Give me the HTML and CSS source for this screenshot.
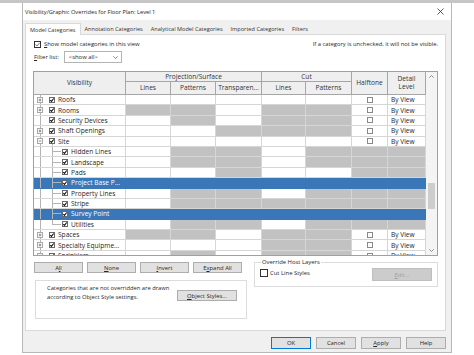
FILE: index.html
```html
<!DOCTYPE html>
<html lang="en">
<head>
    <meta charset="UTF-8">
    <meta name="viewport" content="width=device-width, initial-scale=1.0">
    <title>Visibility/Graphic Overrides</title>
    <link rel="stylesheet" href="styles.css">
</head>
<body>
    <svg class="defs" width="0" height="0">
        <symbol id="check" viewBox="0 0 6 6">
            <rect x="0.5" y="0.5" width="5" height="5" fill="#fff" stroke="#6a6a6a"/>
            <path d="M1.3 3.1 L2.5 4.4 L4.7 1.5" fill="none" stroke="#111" stroke-width="1.1"/>
        </symbol>
        <symbol id="plus" viewBox="0 0 6 6">
            <rect x="0.5" y="0.5" width="5" height="5" fill="#fff" stroke="#a8a8a8"/>
            <path d="M1.6 3 H4.4 M3 1.6 V4.4" stroke="#6a6a6a" stroke-width="0.8"/>
        </symbol>
        <symbol id="minus" viewBox="0 0 6 6">
            <rect x="0.5" y="0.5" width="5" height="5" fill="#fff" stroke="#a8a8a8"/>
            <path d="M1.6 3 H4.4" stroke="#6a6a6a" stroke-width="0.8"/>
        </symbol>
    </svg>

    <div class="top-strip"></div>

    <div class="dialog">
        <div class="titlebar">
            <span>Visibility/Graphic Overrides for Floor Plan: Level 1</span>
            <svg class="close" viewBox="0 0 7 7"><path d="M0.5 0.5 L6.5 6.5 M6.5 0.5 L0.5 6.5" stroke="#333" stroke-width="0.8"/></svg>
        </div>

        <div class="dialog-body">
            <div class="tabs">
                <div class="tab active">Model Categories</div>
                <div class="tab">Annotation Categories</div>
                <div class="tab">Analytical Model Categories</div>
                <div class="tab">Imported Categories</div>
                <div class="tab">Filters</div>
            </div>

            <div class="panel">
                <div class="opts">
                    <label class="check-label">
                        <svg class="box7" viewBox="0 0 7 7"><rect x="0.5" y="0.5" width="6" height="6" fill="#fff" stroke="#333"/><path d="M1.4 3.6 L2.9 5 L5.6 1.9" fill="none" stroke="#333" stroke-width="0.7"/></svg>
                        <span><u>S</u>how model categories in this view</span>
                    </label>
                    <span class="hint">If a category is unchecked, it will not be visible.</span>
                </div>

                <div class="filter">
                    <span><u>F</u>ilter list:</span>
                    <div class="select">
                        <span>&lt;show all&gt;</span>
                        <svg class="chev" viewBox="0 0 5 3"><path d="M0.3 0.3 L2.5 2.5 L4.7 0.3" fill="none" stroke="#555" stroke-width="0.7"/></svg>
                    </div>
                </div>

                <div class="grid-wrap">
                    <div class="grid">
                        <div class="head">
                            <div class="h-vis">Visibility</div>
                            <div class="h-proj">Projection/Surface</div>
                            <div class="h-cut">Cut</div>
                            <div class="h-half">Halftone</div>
                            <div class="h-detail">Detail<br>Level</div>
                            <div>Lines</div>
                            <div>Patterns</div>
                            <div>Transparen...</div>
                            <div>Lines</div>
                            <div>Patterns</div>
                        </div>

                        <div class="rows">
                            <div class="row">
                                <div class="cell name"><svg class="exp"><use href="#plus"/></svg><svg class="cb"><use href="#check"/></svg><span>Roofs</span></div>
                                <div class="cell"></div><div class="cell"></div><div class="cell"></div><div class="cell"></div><div class="cell"></div>
                                <div class="cell ht"><span class="box"></span></div><div class="cell dl">By View</div>
                            </div>
                            <div class="row">
                                <div class="cell name"><svg class="exp"><use href="#plus"/></svg><svg class="cb"><use href="#check"/></svg><span>Rooms</span></div>
                                <div class="cell off"></div><div class="cell off"></div><div class="cell"></div><div class="cell off"></div><div class="cell off"></div>
                                <div class="cell ht"><span class="box"></span></div><div class="cell dl">By View</div>
                            </div>
                            <div class="row">
                                <div class="cell name"><span class="exp-gap"></span><svg class="cb"><use href="#check"/></svg><span>Security Devices</span></div>
                                <div class="cell"></div><div class="cell off"></div><div class="cell"></div><div class="cell off"></div><div class="cell off"></div>
                                <div class="cell ht"><span class="box"></span></div><div class="cell dl">By View</div>
                            </div>
                            <div class="row">
                                <div class="cell name"><svg class="exp"><use href="#plus"/></svg><svg class="cb"><use href="#check"/></svg><span>Shaft Openings</span></div>
                                <div class="cell"></div><div class="cell"></div><div class="cell off"></div><div class="cell off"></div><div class="cell off"></div>
                                <div class="cell ht"><span class="box"></span></div><div class="cell dl">By View</div>
                            </div>
                            <div class="row">
                                <div class="cell name open"><svg class="exp"><use href="#minus"/></svg><svg class="cb"><use href="#check"/></svg><span>Site</span></div>
                                <div class="cell"></div><div class="cell"></div><div class="cell"></div><div class="cell"></div><div class="cell"></div>
                                <div class="cell ht"><span class="box"></span></div><div class="cell dl">By View</div>
                            </div>
                            <div class="row">
                                <div class="cell name child"><svg class="cb"><use href="#check"/></svg><span>Hidden Lines</span></div>
                                <div class="cell"></div><div class="cell off"></div><div class="cell off"></div><div class="cell"></div><div class="cell off"></div>
                                <div class="cell off"></div><div class="cell off"></div>
                            </div>
                            <div class="row">
                                <div class="cell name child"><svg class="cb"><use href="#check"/></svg><span>Landscape</span></div>
                                <div class="cell"></div><div class="cell off"></div><div class="cell off"></div><div class="cell"></div><div class="cell off"></div>
                                <div class="cell off"></div><div class="cell off"></div>
                            </div>
                            <div class="row">
                                <div class="cell name child"><svg class="cb"><use href="#check"/></svg><span>Pads</span></div>
                                <div class="cell"></div><div class="cell"></div><div class="cell off"></div><div class="cell"></div><div class="cell"></div>
                                <div class="cell off"></div><div class="cell off"></div>
                            </div>
                            <div class="row sel">
                                <div class="cell name child"><svg class="cb"><use href="#check"/></svg><span>Project Base P...</span></div>
                                <div class="cell"></div><div class="cell"></div><div class="cell"></div><div class="cell"></div><div class="cell"></div>
                                <div class="cell"></div><div class="cell"></div>
                            </div>
                            <div class="row">
                                <div class="cell name child"><svg class="cb"><use href="#check"/></svg><span>Property Lines</span></div>
                                <div class="cell"></div><div class="cell off"></div><div class="cell off"></div><div class="cell"></div><div class="cell off"></div>
                                <div class="cell off"></div><div class="cell off"></div>
                            </div>
                            <div class="row">
                                <div class="cell name child"><svg class="cb"><use href="#check"/></svg><span>Stripe</span></div>
                                <div class="cell"></div><div class="cell off"></div><div class="cell off"></div><div class="cell off"></div><div class="cell off"></div>
                                <div class="cell off"></div><div class="cell off"></div>
                            </div>
                            <div class="row sel">
                                <div class="cell name child"><svg class="cb"><use href="#check"/></svg><span>Survey Point</span></div>
                                <div class="cell"></div><div class="cell"></div><div class="cell"></div><div class="cell"></div><div class="cell"></div>
                                <div class="cell"></div><div class="cell"></div>
                            </div>
                            <div class="row">
                                <div class="cell name child last"><svg class="cb"><use href="#check"/></svg><span>Utilities</span></div>
                                <div class="cell"></div><div class="cell off"></div><div class="cell off"></div><div class="cell"></div><div class="cell off"></div>
                                <div class="cell off"></div><div class="cell off"></div>
                            </div>
                            <div class="row">
                                <div class="cell name"><svg class="exp"><use href="#plus"/></svg><svg class="cb"><use href="#check"/></svg><span>Spaces</span></div>
                                <div class="cell off"></div><div class="cell off"></div><div class="cell"></div><div class="cell off"></div><div class="cell off"></div>
                                <div class="cell ht"><span class="box"></span></div><div class="cell dl">By View</div>
                            </div>
                            <div class="row">
                                <div class="cell name"><svg class="exp"><use href="#plus"/></svg><svg class="cb"><use href="#check"/></svg><span>Specialty Equipme...</span></div>
                                <div class="cell"></div><div class="cell"></div><div class="cell"></div><div class="cell off"></div><div class="cell off"></div>
                                <div class="cell ht"><span class="box"></span></div><div class="cell dl">By View</div>
                            </div>
                            <div class="row">
                                <div class="cell name"><svg class="exp"><use href="#plus"/></svg><svg class="cb"><use href="#check"/></svg><span>Sprinklers</span></div>
                                <div class="cell"></div><div class="cell off"></div><div class="cell"></div><div class="cell off"></div><div class="cell off"></div>
                                <div class="cell ht"><span class="box"></span></div><div class="cell dl">By View</div>
                            </div>
                        </div>
                    </div>

                    <div class="scroll">
                        <div class="sb-btn up"><svg class="chev" viewBox="0 0 5 3"><path d="M0.3 2.7 L2.5 0.5 L4.7 2.7" fill="none" stroke="#666" stroke-width="0.7"/></svg></div>
                        <div class="sb-track"><div class="thumb"></div></div>
                        <div class="sb-btn down"><svg class="chev" viewBox="0 0 5 3"><path d="M0.3 0.3 L2.5 2.5 L4.7 0.3" fill="none" stroke="#666" stroke-width="0.7"/></svg></div>
                    </div>
                </div>

                <div class="actions">
                    <div class="left-col">
                        <div class="btn-row">
                            <button class="btn">A<u>l</u>l</button>
                            <button class="btn"><u>N</u>one</button>
                            <button class="btn"><u>I</u>nvert</button>
                            <button class="btn">E<u>x</u>pand All</button>
                        </div>
                        <div class="note-box">
                            <p>Categories that are not overridden are drawn<br>according to Object Style settings.</p>
                            <button class="btn obj-btn"><u>O</u>bject Styles...</button>
                        </div>
                    </div>

                    <fieldset class="host">
                        <legend>Override Host Layers</legend>
                        <div class="host-inner">
                            <label class="check-label cut">
                                <span class="box8"></span>
                                <span>Cut Line Styles</span>
                            </label>
                            <button class="btn edit-btn" disabled><u>E</u>dit...</button>
                        </div>
                    </fieldset>
                </div>
            </div>

            <div class="footer">
                <button class="fbtn ok">OK</button>
                <button class="fbtn">Cancel</button>
                <button class="fbtn"><u>A</u>pply</button>
                <button class="fbtn">Help</button>
            </div>
        </div>
    </div>
</body>
</html>
```

FILE: styles.css
```css
:root {
    --body: #f0f0f0;
    --line: #d6d6d6;
    --head-line: #a6a6a6;
    --off: #c2c2c2;
    --sel: #3a77b9;
    --text: #262626;
}

* {
    margin: 0;
    padding: 0;
    box-sizing: border-box;
}

body {
    font-family: "Open Sans", "Noto Sans", sans-serif;
    font-size: 5.9px;
    color: var(--text);
    background-color: #fff;
}

.defs {
    display: none;
}

u {
    text-decoration-thickness: 0.5px;
}

.top-strip {
    height: 3px;
    background-color: #c6c6c6;
}

/* dialog frame */
.dialog {
    width: 430px;
    height: 350px;
    margin-left: 22px;
    background-color: var(--body);
    border: 1px solid #b8b8b8;
    border-top: none;
    display: flex;
    flex-direction: column;
}

.titlebar {
    height: 17px;
    background-color: #fff;
    display: flex;
    align-items: center;
    justify-content: space-between;
    padding: 0 7px 0 2px;
    font-size: 5.7px;
    color: #1e1e1e;
}

.close {
    width: 7px;
    height: 7px;
}

.dialog-body {
    flex: 1;
    padding: 3px 5px 0 2px;
    display: flex;
    flex-direction: column;
}

/* tabs */
.tabs {
    display: flex;
    height: 11px;
    font-size: 5.6px;
}

.tab {
    height: 11px;
    padding: 0 3px;
    display: flex;
    align-items: center;
    border: 1px solid transparent;
    border-bottom: none;
    color: #333;
}

.tab.active {
    height: 12px;
    padding: 0 4px;
    background-color: #fff;
    border-color: #d9d9d9;
    margin-bottom: -1px;
    position: relative;
    z-index: 1;
}

.panel {
    height: 297px;
    background-color: #fff;
    border: 1px solid #d9d9d9;
    padding: 5px 7px 0;
}

.opts {
    height: 8px;
    display: flex;
    align-items: center;
    justify-content: space-between;
}

.check-label {
    display: flex;
    align-items: center;
    gap: 3px;
    margin-left: 1px;
}

.box7 {
    width: 7px;
    height: 7px;
}

.hint {
    font-size: 5.8px;
}

.filter {
    height: 12px;
    margin-top: 3px;
    margin-left: 1px;
    display: flex;
    align-items: center;
    gap: 5px;
}

.select {
    width: 58px;
    height: 12px;
    border: 1px solid #b4b4b4;
    display: flex;
    align-items: center;
    justify-content: space-between;
    padding: 0 3px 0 4px;
}

.chev {
    width: 5px;
    height: 3px;
}

/* category grid */
.grid-wrap {
    height: 185px;
    margin-top: 8px;
    border: 1px solid #a0a0a0;
    display: flex;
}

.grid {
    width: 392px;
    display: flex;
    flex-direction: column;
    overflow: hidden;
    font-size: 6.6px;
}

.head,
.row {
    display: grid;
    grid-template-columns: 92px 45px 45px 46px 44px 46px 36px 38px;
}

.head {
    grid-template-rows: 10px 13px;
    background-color: #efefef;
    flex: none;
}

.head div {
    border-right: 1px solid var(--head-line);
    border-bottom: 1px solid var(--head-line);
    display: flex;
    align-items: center;
    justify-content: center;
    text-align: center;
    line-height: 8px;
    color: #333;
}

.h-vis { grid-row: 1 / 3; grid-column: 1; }
.h-proj { grid-column: 2 / 5; }
.h-cut { grid-column: 5 / 7; }
.h-half { grid-row: 1 / 3; grid-column: 7; }
.h-detail { grid-row: 1 / 3; grid-column: 8; }

.rows {
    flex: 1;
    overflow: hidden;
}

.row {
    height: 10.4px;
}

.cell {
    border-right: 1px solid var(--line);
    border-bottom: 1px solid var(--line);
    display: flex;
    align-items: center;
    white-space: nowrap;
    overflow: hidden;
}

.cell.off {
    background-color: var(--off);
}

.row.sel .cell {
    background-color: var(--sel);
    border-color: var(--sel);
    color: #fff;
}

.name {
    padding-left: 3px;
    background-image: linear-gradient(#b4b4b4, #b4b4b4);
    background-size: 1px 100%;
    background-position: 6px 0;
    background-repeat: no-repeat;
}

.name.open {
    background-image: linear-gradient(#b4b4b4, #b4b4b4), linear-gradient(#b4b4b4, #b4b4b4);
    background-size: 1px 100%, 1px 50%;
    background-position: 6px 0, 18px 100%;
}

.name.child {
    padding-left: 28px;
    background-image: linear-gradient(#b4b4b4, #b4b4b4), linear-gradient(#b4b4b4, #b4b4b4), linear-gradient(#b4b4b4, #b4b4b4);
    background-size: 1px 100%, 1px 100%, 9px 1px;
    background-position: 6px 0, 18px 0, 18px 50%;
}

.name.child.last {
    background-size: 1px 100%, 1px 50%, 9px 1px;
}

.exp,
.exp-gap {
    width: 6px;
    height: 6px;
    flex: none;
}

.cb {
    width: 6px;
    height: 6px;
    margin: 0 3px 0 6px;
    flex: none;
}

.child .cb {
    margin-left: 0;
}

.ht {
    justify-content: center;
}

.box {
    width: 6px;
    height: 6px;
    border: 1px solid #8a8a8a;
    background-color: #fff;
}

.dl {
    padding-left: 3px;
}

/* scrollbar */
.scroll {
    flex: 1;
    background-color: #f4f4f4;
    display: flex;
    flex-direction: column;
    align-items: center;
}

.sb-btn {
    display: flex;
    align-items: center;
    justify-content: center;
}

.sb-btn.up { height: 8px; }
.sb-btn.down { height: 10px; }

.sb-track {
    flex: 1;
}

.thumb {
    width: 7px;
    height: 26px;
    margin-top: 103px;
    background-color: #cdcdcd;
}

/* buttons and groups */
.actions {
    display: flex;
    margin-top: 6px;
}

.left-col {
    width: 214px;
}

.btn-row {
    display: flex;
    gap: 4px;
    margin-left: 1px;
}

.btn,
.fbtn {
    font-family: inherit;
    font-size: inherit;
    color: var(--text);
    background-color: #e1e1e1;
    border: 1px solid #adadad;
    display: flex;
    align-items: center;
    justify-content: center;
}

.btn {
    width: 49px;
    height: 11px;
}

.note-box {
    height: 39px;
    margin: 7px 0 0 2px;
    border: 1px solid #dcdcdc;
    padding: 3px 9px 0 11px;
    display: flex;
    justify-content: space-between;
}

.note-box p {
    line-height: 9px;
    white-space: nowrap;
    font-size: 5.8px;
}

.obj-btn {
    width: 60px;
    margin-top: 6px;
}

.host {
    width: 184px;
    height: 29px;
    margin: -4px 0 0 7px;
    border: 1px solid #dcdcdc;
    padding: 0 5px 0 4px;
}

.host legend {
    padding: 0 1px;
    margin-left: 2px;
    line-height: 8px;
}

.host-inner {
    display: flex;
    justify-content: space-between;
    align-items: flex-start;
}

.cut {
    margin-top: 3px;
    gap: 2px;
}

.box8 {
    width: 8px;
    height: 8px;
    border: 1px solid #333;
    background-color: #fff;
}

.edit-btn {
    width: 60px;
    height: 13px;
    margin-top: 2px;
    background-color: #cccccc;
    border-color: #bfbfbf;
    color: #a0a0a0;
}

.footer {
    display: flex;
    justify-content: flex-end;
    gap: 5px;
    margin-top: 6px;
}

.fbtn {
    width: 40px;
    height: 12px;
}

.fbtn.ok {
    border-color: #0078d7;
}
```
